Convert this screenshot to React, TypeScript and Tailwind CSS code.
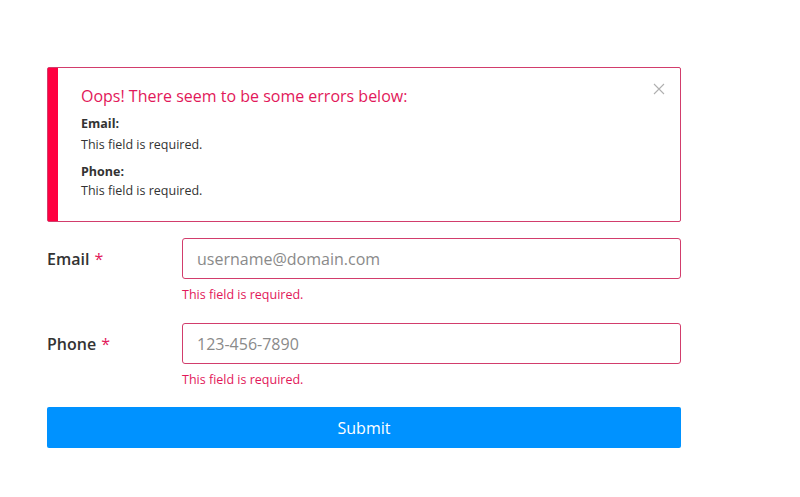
import React from "react";

const font = { fontFamily: '"Open Sans", "Noto Sans", sans-serif' };

export default function App() {
  return (
    <div className="min-h-[497px] w-[800px] bg-white" style={font}>
      <div className="ml-[47px] w-[634px] pt-[67px]">
        <div className="relative flex rounded-[2px] border border-[#d23d6c] bg-white">
          <div className="w-[10px] shrink-0 bg-[#ff0040]" />
          <div className="pl-[23px] pt-[16px] pb-[20px]">
            <div className="text-[16px] leading-[24px] text-[#e2185a]">
              Oops! There seem to be some errors below:
            </div>
            <div className="mt-[5px] text-[12.5px] leading-[21px] text-[#333]">
              <div className="font-bold">Email:</div>
              <div>This field is required.</div>
              <div className="mt-[6px] font-bold">Phone:</div>
              <div className="-mt-[2px]">This field is required.</div>
            </div>
          </div>
          <button className="absolute right-[15px] top-[15px] flex h-[12px] w-[12px] items-center justify-center text-[#b0b0b0]">
            <svg width="12" height="12" viewBox="0 0 12 12" fill="none" stroke="currentColor" strokeWidth="1.1">
              <path d="M1 1 L11 11 M11 1 L1 11" />
            </svg>
          </button>
        </div>

        <div className="mt-[16px] flex">
          <div className="flex h-[41px] w-[135px] shrink-0 items-center text-[16px] font-semibold text-[#333]">
            Email<span className="ml-[5px] font-normal text-[#e2185a]">*</span>
          </div>
          <div className="flex-1">
            <input
              className="h-[41px] w-full rounded-[3px] border border-[#d23d6c] px-[14px] text-[16px] text-[#333] outline-none placeholder:text-[#8a8a8a]"
              placeholder="username@domain.com"
              style={font}
            />
            <div className="mt-[7px] text-[12.5px] leading-[18px] text-[#e2185a]">This field is required.</div>
          </div>
        </div>

        <div className="mt-[19px] flex">
          <div className="flex h-[41px] w-[135px] shrink-0 items-center text-[16px] font-semibold text-[#333]">
            Phone<span className="ml-[5px] font-normal text-[#e2185a]">*</span>
          </div>
          <div className="flex-1">
            <input
              className="h-[41px] w-full rounded-[3px] border border-[#d23d6c] px-[14px] text-[16px] text-[#333] outline-none placeholder:text-[#8a8a8a]"
              placeholder="123-456-7890"
              style={font}
            />
            <div className="mt-[7px] text-[12.5px] leading-[18px] text-[#e2185a]">This field is required.</div>
          </div>
        </div>

        <button
          className="mt-[18px] flex h-[41px] w-full items-center justify-center rounded-[2px] bg-[#0092ff] text-[16px] text-white"
          style={font}
        >
          Submit
        </button>
      </div>
    </div>
  );
}
